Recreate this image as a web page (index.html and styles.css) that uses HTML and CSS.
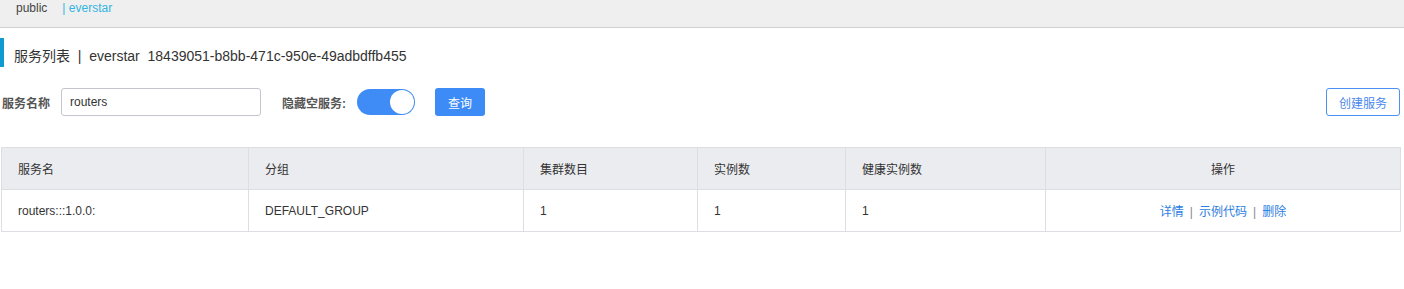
FILE: index.html
```html
<!DOCTYPE html>
<html>
<head>
<meta charset="utf-8">
<link rel="stylesheet" href="styles.css">
</head>
<body>
<div class="crumbs">
  <span class="ns">public</span>
  <span class="ns-active">| everstar</span>
</div>
<div class="title">服务列表 &nbsp;|&nbsp; everstar &nbsp;18439051-b8bb-471c-950e-49adbdffb455</div>
<div class="filters">
  <div class="left">
    <span class="label">服务名称</span>
    <div class="input">routers</div>
    <span class="label label2">隐藏空服务:</span>
    <div class="switch"><span class="knob"></span></div>
    <button class="btn-primary">查询</button>
  </div>
  <button class="btn-outline">创建服务</button>
</div>
<table class="grid">
  <colgroup>
    <col style="width:247px"><col style="width:275px"><col style="width:174px"><col style="width:148px"><col style="width:200px"><col>
  </colgroup>
  <thead>
    <tr><th>服务名</th><th>分组</th><th>集群数目</th><th>实例数</th><th>健康实例数</th><th class="ops">操作</th></tr>
  </thead>
  <tbody>
    <tr><td>routers:::1.0.0:</td><td>DEFAULT_GROUP</td><td>1</td><td>1</td><td>1</td>
      <td class="ops"><a>详情</a><span class="sep">|</span><a>示例代码</a><span class="sep">|</span><a>删除</a></td></tr>
  </tbody>
</table>
</body>
</html>
```
FILE: styles.css
```css
* { box-sizing: border-box; }
body {
  margin: 0;
  font-family: "Liberation Sans", "Noto Sans CJK SC", sans-serif;
  font-size: 12px;
  color: #333;
  background: #fff;
  width: 1404px;
}
.crumbs {
  height: 28px;
  background: #efefef;
  border-bottom: 1px solid #cfcfcf;
  padding: 0 0 0 16px;
  display: flex;
  align-items: flex-start;
  line-height: 17px;
  font-size: 12px;
}
.ns { color: #444; margin-right: 15px; }
.ns-active { color: #33b5e0; }
.title {
  margin-top: 10px;
  height: 29px;
  border-left: 4px solid #0f9bd2;
  padding: 8px 0 0 10px;
  font-size: 14px;
  line-height: 20px;
  color: #333;
}
.filters {
  margin-top: 21px;
  display: flex;
  justify-content: space-between;
  align-items: center;
  padding: 0 4px 0 2px;
}
.left { display: flex; align-items: center; }
.label { color: #555; font-weight: bold; font-size: 12px; margin-right: 11px; }
.label2 { margin-left: 21px; }
.input {
  width: 200px;
  height: 28px;
  border: 1px solid #c4c6cf;
  border-radius: 3px;
  padding-left: 8px;
  line-height: 26px;
  font-size: 12px;
  color: #333;
}
.switch {
  width: 58px;
  height: 26px;
  border-radius: 13px;
  background: #3f8cf7;
  display: flex;
  justify-content: flex-end;
  align-items: center;
  padding: 1px;
}
.knob {
  width: 24px;
  height: 24px;
  border-radius: 50%;
  background: #fff;
}
.btn-primary {
  margin-left: 20px;
  width: 50px;
  height: 28px;
  border: none;
  border-radius: 3px;
  background: #3d8bf7;
  color: #fff;
  font-family: inherit;
  font-size: 12px;
  padding: 0;
}
.btn-outline {
  width: 74px;
  height: 28px;
  border: 1px solid #4a90f5;
  border-radius: 3px;
  background: #fff;
  color: #4a87ee;
  font-family: inherit;
  font-size: 12px;
  padding: 0;
}
.grid {
  margin: 31px 0 0 1px;
  width: 1400px;
  border-collapse: collapse;
  table-layout: fixed;
}
.grid th, .grid td {
  border: 1px solid #dcdee3;
  height: 42px;
  padding: 0 16px;
  text-align: left;
  font-weight: normal;
  font-size: 12px;
  color: #333;
}
.grid th { background: #ebecf0; }
.grid .ops { text-align: center; }
.grid a { color: #2a7de1; }
.sep { color: #888; margin: 0 6px; }
```
